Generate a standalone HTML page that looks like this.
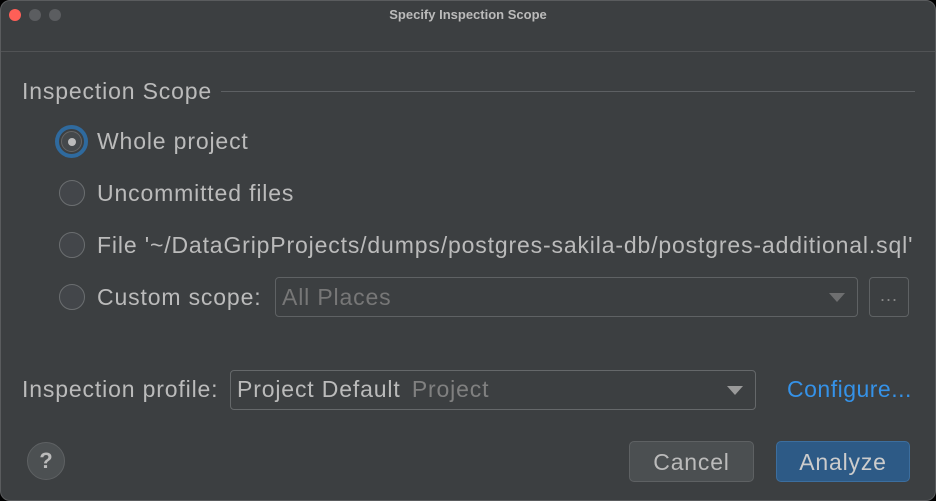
<!DOCTYPE html>
<html><head><style>
body{margin:0;width:936px;height:501px;background:#000;overflow:hidden;font-family:"Liberation Sans",sans-serif;}
.win{position:absolute;left:0;top:0;width:934px;height:499px;background:#3c3f41;border:1px solid #5a5c5e;border-radius:10px;overflow:hidden;}
.tb{height:50px;border-bottom:1px solid #515355;}
.dot{position:absolute;top:8px;width:12px;height:12px;border-radius:50%;background:#5b5d60;}
.title{position:absolute;top:6px;width:100%;text-align:center;color:#bbb;font-size:13px;font-weight:bold;}
.t{position:absolute;color:#bbbbbb;font-size:23px;letter-spacing:0.85px;white-space:nowrap;}
.r{position:absolute;width:26px;height:26px;border-radius:50%;border:1.5px solid #6b6e70;background:#43464a;box-sizing:border-box;}
.box{position:absolute;border:1.5px solid #5f6264;border-radius:4px;box-sizing:border-box;}
.tri{position:absolute;width:0;height:0;border-left:8px solid transparent;border-right:8px solid transparent;border-top:9px solid #9a9a9a;}
</style></head><body>
<div class="win">
<div class="tb"></div>
<div class="dot" style="left:8px;background:#fe5f57"></div>
<div class="dot" style="left:28px"></div>
<div class="dot" style="left:48px"></div>
<div class="title">Specify Inspection Scope</div>
<div class="t" style="left:21px;top:77px">Inspection Scope</div>
<div style="position:absolute;left:220px;top:90px;width:694px;height:1px;background:#5d6063"></div>
<div style="position:absolute;left:54px;top:124px;width:33px;height:33px;border-radius:50%;border:4px solid #2f6a9e;box-sizing:border-box;"><div style="position:absolute;left:2px;top:2px;width:21px;height:21px;border-radius:50%;background:#44484b;border:1px solid #666;box-sizing:border-box"><div style="position:absolute;left:5.5px;top:5.5px;width:8px;height:8px;border-radius:50%;background:#bbb"></div></div></div>
<div class="t" style="left:96px;top:127px">Whole project</div>
<div class="r" style="left:58px;top:179px"></div>
<div class="t" style="left:96px;top:179px">Uncommitted files</div>
<div class="r" style="left:58px;top:231px"></div>
<div class="t" style="left:96px;top:231px">File '~/DataGripProjects/dumps/postgres-sakila-db/postgres-additional.sql'</div>
<div class="r" style="left:58px;top:283px"></div>
<div class="t" style="left:96px;top:283px">Custom scope:</div>
<div class="box" style="left:274px;top:276px;width:583px;height:40px"></div>
<div class="t" style="left:281px;top:283px;color:#777">All Places</div>
<div class="tri" style="left:828px;top:292px;border-top-color:#6e6f70"></div>
<div class="box" style="left:868px;top:276px;width:40px;height:40px"></div>
<div class="t" style="left:879px;top:284px;color:#888;font-size:18px;letter-spacing:1px">...</div>
<div class="t" style="left:21px;top:375px">Inspection profile:</div>
<div class="box" style="left:229px;top:369px;width:526px;height:40px;border-color:#65686a"></div>
<div class="t" style="left:236px;top:375px">Project Default <span style="color:#808080;margin-left:4px">Project</span></div>
<div class="tri" style="left:726px;top:385px"></div>
<div class="t" style="left:786px;top:375px;color:#3592e8;letter-spacing:0.5px">Configure...</div>
<div style="position:absolute;left:26px;top:441px;width:38px;height:38px;border-radius:50%;background:#4c5052;border:1px solid #5e6163;box-sizing:border-box;color:#bbb;font-size:22px;font-weight:bold;text-align:center;line-height:36px">?</div>
<div style="position:absolute;left:628px;top:440px;width:125px;height:41px;border-radius:5px;background:#4b4f51;border:1px solid #5e6163;box-sizing:border-box;color:#bbb;font-size:23px;letter-spacing:0.8px;text-align:center;line-height:40px">Cancel</div>
<div style="position:absolute;left:775px;top:440px;width:134px;height:41px;border-radius:5px;background:#2d5a86;border:1px solid #3c6e9e;box-sizing:border-box;color:#ccc;font-size:23px;letter-spacing:0.8px;text-align:center;line-height:40px">Analyze</div>
</div>
</body></html>
